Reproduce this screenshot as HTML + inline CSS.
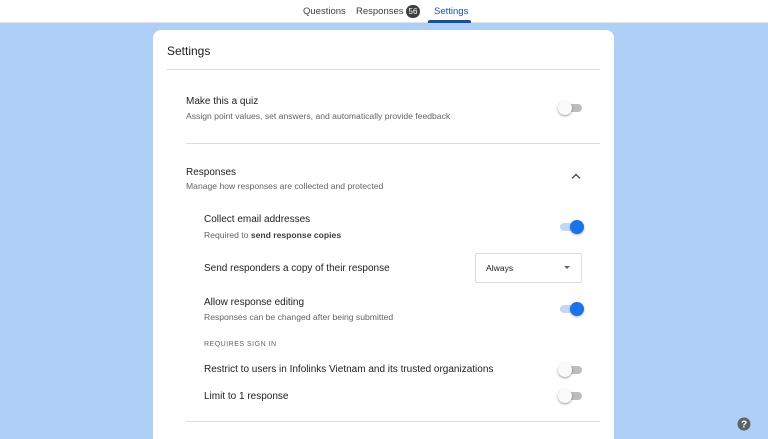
<!DOCTYPE html>
<html style="height:439px;overflow:hidden"><head><meta charset="utf-8"><style>
*{box-sizing:border-box;margin:0;padding:0}
body{width:768px;height:439px;overflow:hidden;background:#aecff6;font-family:"Liberation Sans",Arial,sans-serif;color:#202124;position:relative}
.top{position:absolute;left:0;top:0;width:768px;height:23px;background:#fff;border-bottom:1px solid #e6e0d8}
.tab{position:absolute;top:6px;font-size:9.5px;color:#3c4043}
.badge{position:absolute;left:406px;top:5px;width:14px;height:13px;border-radius:7px;background:#3c4043;color:#fff;font-size:8px;text-align:center;line-height:13px}
.ul{position:absolute;left:428px;top:20px;width:43px;height:3px;background:#1a4fa0;border-radius:2px 2px 0 0}
.card{position:absolute;left:153px;top:30px;width:461px;height:409px;background:#fff;border-radius:8px 8px 0 0}
.t{position:absolute;font-size:10px;color:#202124;white-space:nowrap}
.s{position:absolute;font-size:8.6px;color:#5f6368;white-space:nowrap}
.hr{position:absolute;height:1px;background:#dadce0}
.tg{position:absolute;width:22px;height:8px;border-radius:4px}
.tg i{position:absolute;top:-3px;width:14px;height:14px;border-radius:50%}
.off{background:#bdbdbd}.off i{left:-2px;background:#fafafa;box-shadow:0 1px 2px rgba(0,0,0,.4)}
.on{background:#c3d8f8}.on i{left:10px;background:#1a73e8;box-shadow:0 1px 2px rgba(0,0,0,.3)}
</style></head><body>
<div class="top">
<span class="tab" style="left:303px">Questions</span>
<span class="tab" style="left:356px">Responses</span>
<span class="badge">56</span>
<span class="tab" style="left:434px;color:#1a4fa0">Settings</span>
<div class="ul"></div>
</div>
<div class="card"></div>
<div class="t" style="left:167px;top:44px;font-size:12px">Settings</div>
<div class="hr" style="left:167px;top:69px;width:433px"></div>
<div class="t" style="left:186px;top:96px">Make this a quiz</div>
<div class="s" style="left:186px;top:111px">Assign point values, set answers, and automatically provide feedback</div>
<div class="tg off" style="left:560px;top:104px"><i></i></div>
<div class="hr" style="left:186px;top:143px;width:414px"></div>
<div class="t" style="left:186px;top:167px">Responses</div>
<div class="s" style="left:186px;top:181px">Manage how responses are collected and protected</div>
<div style="position:absolute;left:573px;top:175px;width:6px;height:6px;border-left:1.6px solid #202124;border-top:1.6px solid #202124;transform:rotate(45deg)"></div>
<div class="t" style="left:204px;top:214px">Collect email addresses</div>
<div class="s" style="left:204px;top:230px">Required to <b style="color:#3c4043">send response copies</b></div>
<div class="tg on" style="left:560px;top:223px"><i></i></div>
<div class="t" style="left:204px;top:263px">Send responders a copy of their response</div>
<div style="position:absolute;left:475px;top:253px;width:107px;height:30px;border:1px solid #dadce0;border-radius:2px"></div>
<div class="s" style="left:486px;top:263px;color:#202124">Always</div>
<div style="position:absolute;left:564px;top:266px;border-left:3.5px solid transparent;border-right:3.5px solid transparent;border-top:3.5px solid #5f6368"></div>
<div class="t" style="left:204px;top:297px">Allow response editing</div>
<div class="s" style="left:204px;top:312px">Responses can be changed after being submitted</div>
<div class="tg on" style="left:560px;top:305px"><i></i></div>
<div class="s" style="left:204px;top:341px;font-size:7px;letter-spacing:.5px;color:#5f6368">REQUIRES SIGN IN</div>
<div class="t" style="left:204px;top:364px">Restrict to users in Infolinks Vietnam and its trusted organizations</div>
<div class="tg off" style="left:560px;top:366px"><i></i></div>
<div class="t" style="left:204px;top:391px">Limit to 1 response</div>
<div class="tg off" style="left:560px;top:392px"><i></i></div>
<div class="hr" style="left:186px;top:421px;width:414px"></div>
<svg style="position:absolute;left:737px;top:417px" width="14" height="14" viewBox="0 0 14 14"><circle cx="7" cy="7" r="6.5" fill="#5f6368"/><text x="7" y="10.5" font-size="10" font-weight="bold" fill="#fff" text-anchor="middle" font-family="Liberation Sans">?</text></svg>
</body></html>
